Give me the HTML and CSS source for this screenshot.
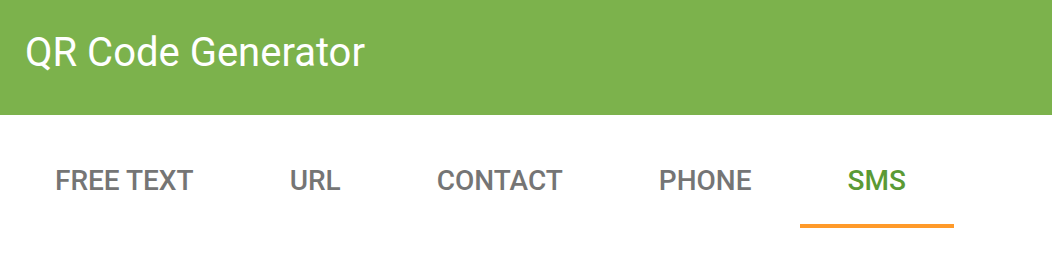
FILE: index.html
```html
<!DOCTYPE html>
<html lang="en">
<head>
<meta charset="utf-8">
<title>QR Code Generator</title>
<link rel="stylesheet" href="styles.css">
</head>
<body>
	<div class="toolbar">
		<h1>QR Code Generator</h1>
	</div>
	<div class="tabs">
		<div class="tab">Free Text</div>
		<div class="tab">URL</div>
		<div class="tab">Contact</div>
		<div class="tab">Phone</div>
		<div class="tab active">SMS</div>
	</div>
</body>
</html>
```

FILE: styles.css
```css
* {
	margin:0;
	padding:0;
	box-sizing:border-box;
}
body {
	font-family:Roboto, "Liberation Sans", sans-serif;
	background:#fff;
}
.toolbar {
	height:115px;
	background:#7cb24c;
	display:flex;
	align-items:center;
	padding-left:25px;
	padding-bottom:10px;
}
.toolbar h1 {
	font-size:40px;
	font-weight:400;
	color:#fff;
}
.tabs {
	display:flex;
	margin-top:17px;
	padding-left:7px;
}
.tab {
	height:96px;
	padding:0 48px;
	display:flex;
	align-items:center;
	justify-content:center;
	font-size:28px;
	font-weight:500;
	text-transform:uppercase;
	color:#757575;
	border-bottom:4px solid transparent;
	padding-top:4px;
}
.tab.active {
	color:#5a9a35;
	border-bottom-color:#ff9a2a;
}
```
